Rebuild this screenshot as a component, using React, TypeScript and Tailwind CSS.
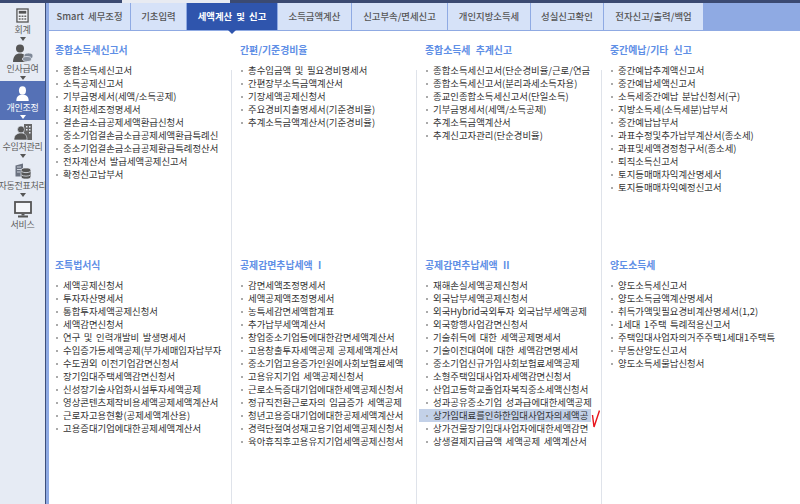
const tabs = [
  { label: 'Smart 세무조정', width: 'w-[81px]' },
  { label: '기초입력', width: 'w-[55px]' },
  { label: '세액계산 및 신고', width: 'w-[90px]', active: true },
  { label: '소득금액계산', width: 'w-[73px]' },
  { label: '신고부속/면세신고', width: 'w-[95px]' },
  { label: '개인지방소득세', width: 'w-[82px]' },
  { label: '성실신고확인', width: 'w-[72px]' },
  { label: '전자신고/출력/백업', width: 'w-[99px]' },
];

const columns = [
  {
    width: 'w-[183px]',
    pad: 'pl-[6px]',
    divider: 'border-r border-[#dfe3ea]',
    top: {
      title: '종합소득세신고서',
      items: ['종합소득세신고서', '소득공제신고서', '기부금명세서(세액/소득공제)', '최저한세조정명세서', '결손금소급공제세액환급신청서', '중소기업결손금소급공제세액환급특례신', '중소기업결손금소급공제환급특례정산서', '전자계산서 발급세액공제신고서', '확정신고납부서'],
    },
    bottom: {
      title: '조특법서식',
      items: ['세액공제신청서', '투자자산명세서', '통합투자세액공제신청서', '세액감면신청서', '연구 및 인력개발비 발생명세서', '수입증가등세액공제(부가세매입자납부자', '수도권외 이전기업감면신청서', '장기임대주택세액감면신청서', '신성장기술사업화시설투자세액공제', '영상콘텐츠제작비용세액공제세액계산서', '근로자고용현황(공제세액계산용)', '고용증대기업에대한공제세액계산서'],
    },
  },
  {
    width: 'w-[185px]',
    pad: 'pl-[8px]',
    divider: 'border-r border-[#dfe3ea]',
    top: {
      title: '간편/기준경비율',
      items: ['총수입금액 및 필요경비명세서', '간편장부소득금액계산서', '기장세액공제신청서', '주요경비지출명세서(기준경비율)', '추계소득금액계산서(기준경비율)'],
    },
    bottom: {
      title: '공제감면추납세액 I',
      items: ['감면세액조정명세서', '세액공제액조정명세서', '농특세감면세액합계표', '추가납부세액계산서', '창업중소기업등에대한감면세액계산서', '고용창출투자세액공제 공제세액계산서', '중소기업고용증가인원에사회보험료세액', '고용유지기업 세액공제신청서', '근로소득증대기업에대한세액공제신청서', '정규직전환근로자의 임금증가 세액공제', '청년고용증대기업에대한공제세액계산서', '경력단절여성재고용기업세액공제신청서', '육아휴직후고용유지기업세액공제신청서'],
    },
  },
  {
    width: 'w-[185px]',
    pad: 'pl-[8px]',
    divider: 'border-r border-[#dfe3ea]',
    top: {
      title: '종합소득세 추계신고',
      items: ['종합소득세신고서(단순경비율/근로/연금', '종합소득세신고서(분리과세소득자용)', '종교인종합소득세신고서(단일소득)', '기부금명세서(세액/소득공제)', '추계소득금액계산서', '추계신고자관리(단순경비율)'],
    },
    bottom: {
      title: '공제감면추납세액 II',
      items: ['재해손실세액공제신청서', '외국납부세액공제신청서', '외국Hybrid국외투자 외국납부세액공제', '외국항행사업감면신청서', '기술취득에 대한 세액공제명세서', '기술이전대여에 대한 세액감면명세서', '중소기업신규가입사회보험료세액공제', '소형주택임대사업자세액감면신청서', '산업고등학교졸업자복직중소세액신청서', '성과공유중소기업 성과급에대한세액공제', '상가임대료를인하한임대사업자의세액공', '상가건물장기임대사업자에대한세액감면', '상생결제지급금액 세액공제 세액계산서'],
      selected: '상가임대료를인하한임대사업자의세액공',
    },
  },
  {
    width: 'flex-1',
    pad: 'pl-[8px]',
    divider: '',
    top: {
      title: '중간예납/기타 신고',
      items: ['중간예납추계액신고서', '중간예납세액신고서', '소득세중간예납 분납신청서(구)', '지방소득세(소득세분)납부서', '중간예납납부서', '과표수정및추가납부계산서(종소세)', '과표및세액경정청구서(종소세)', '퇴직소득신고서', '토지등매매차익계산명세서', '토지등매매차익예정신고서'],
    },
    bottom: {
      title: '양도소득세',
      items: ['양도소득세신고서', '양도소득금액계산명세서', '취득가액및필요경비계산명세서(1,2)', '1세대 1주택 특례적용신고서', '주택임대사업자의거주주택1세대1주택특', '부동산양도신고서', '양도소득세물납신청서'],
    },
  },
];

function CalcIcon() {
  return (
    <svg width="13" height="15" viewBox="0 0 14 16">
      <rect x="1" y="1" width="12" height="14" fill="#f1f3f7" stroke="#555" strokeWidth="1.4" />
      <rect x="3" y="3" width="8" height="3" fill="#555" />
      <path d="M3 8h2v1.5H3zM6 8h2v1.5H6zM9 8h2v1.5H9zM3 11h2v1.5H3zM6 11h2v1.5H6zM9 11h2v1.5H9z" fill="#666" />
    </svg>
  );
}

function PersonCoinIcon() {
  return (
    <svg width="22" height="18" viewBox="0 0 22 18">
      <circle cx="8" cy="4.5" r="4" fill="#555" />
      <path d="M1 18c0-6 3-8.500 7-8.500s7 2.500 7 8.500z" fill="#555" />
      <ellipse cx="16.500" cy="12" rx="4.500" ry="3" fill="#7d8796" stroke="#e6ebf4" strokeWidth="0.8" />
      <ellipse cx="15" cy="15" rx="4.500" ry="2.500" fill="#8a93a1" stroke="#e6ebf4" strokeWidth="0.8" />
    </svg>
  );
}

function PersonIcon() {
  return (
    <svg width="15" height="15" viewBox="0 0 15 17">
      <ellipse cx="7.500" cy="5" rx="4" ry="4.800" fill="#fff" />
      <path d="M0.500 17c0-5 2.500-7 7-7s7 2 7 7z" fill="#fff" />
    </svg>
  );
}

function PersonBuildingIcon() {
  return (
    <svg width="18" height="16" viewBox="0 0 18 16">
      <rect x="10" y="0" width="8" height="16" fill="#666" />
      <path d="M12 2h1.500v1.500H12zM15 2h1.500v1.500H15zM12 5h1.500v1.500H12zM15 5h1.500v1.500H15zM15 8h1.500v1.500H15z" fill="#e6ebf4" />
      <circle cx="7" cy="5.500" r="3.500" fill="#555" stroke="#e6ebf4" strokeWidth="0.6" />
      <path d="M0 16c0-5 3-7 7-7s6 2 6 7z" fill="#555" stroke="#e6ebf4" strokeWidth="0.6" />
    </svg>
  );
}

function DocsDbIcon() {
  return (
    <svg width="16" height="16" viewBox="0 0 16 16">
      <path d="M0.500 2.500 8 0.500v13H0.500z" fill="#6b7280" />
      <path d="M2 4h4M2 6.500h4M2 9h3" stroke="#e6ebf4" strokeWidth="0.8" />
      <rect x="6" y="5" width="10" height="11" rx="3" fill="#555" stroke="#e6ebf4" strokeWidth="0.7" />
      <path d="M6.500 8.500c2 1.500 7 1.500 9 0M6.500 12c2 1.500 7 1.500 9 0" stroke="#e6ebf4" strokeWidth="0.8" fill="none" />
    </svg>
  );
}

function MonitorIcon() {
  return (
    <svg width="18" height="17" viewBox="0 0 18 17">
      <rect x="1" y="1" width="16" height="11" fill="#f4f6fa" stroke="#555" strokeWidth="1.800" />
      <path d="M7.500 13h3v1.500H7.500z" fill="#555" />
      <path d="M4 14.500h10V16.500H4z" fill="#555" />
    </svg>
  );
}

const sideItems = [
  { label: '회계', icon: <CalcIcon />, arrow: true },
  { label: '인사급여', icon: <PersonCoinIcon />, arrow: true },
  { label: '개인조정', icon: <PersonIcon />, arrow: true, active: true },
  { label: '수임처관리', icon: <PersonBuildingIcon />, arrow: true },
  { label: '자동전표처리', icon: <DocsDbIcon />, arrow: true },
  { label: '서비스', icon: <MonitorIcon />, arrow: false },
];

function List({ items, selected }: { items: string[]; selected?: string }) {
  return (
    <ul>
      {items.map((item) => (
        <li
          key={item}
          className={
            item === selected
              ? 'relative -ml-[6px] mr-[10px] flex h-[13px] items-center gap-[5px] bg-[#c3d1e8] pl-[7px] text-[9.4px] leading-[13px] whitespace-nowrap text-[#333] [word-spacing:1.5px]'
              : 'flex h-[13px] items-center gap-[5px] pl-[1px] text-[9.4px] leading-[13px] whitespace-nowrap text-[#333] [word-spacing:1.5px]'
          }
        >
          <span className="h-[2px] w-[2px] shrink-0 bg-[#aaa]" />
          <span>{item}</span>
          {item === selected && (
            <svg className="absolute top-[1px] -right-[9px]" width="9" height="18" viewBox="0 0 9 18">
              <path d="M1.500 5 3 17 8.500 0.500" fill="none" stroke="#e8141c" strokeWidth="1.400" />
            </svg>
          )}
        </li>
      ))}
    </ul>
  );
}

export default function App() {
  return (
    <div className="flex h-[504px] w-[800px] flex-col overflow-hidden bg-white font-['Noto_Sans_CJK_KR','Noto_Sans',sans-serif]">
      <div className="flex h-[3px] shrink-0">
        <div className="w-[122px] bg-[#3b4a72]" />
        <div className="w-[108px] bg-[#e8ebf2]" />
        <div className="flex-1 bg-[#3b4a72]" />
      </div>
      <div className="flex min-h-0 flex-1">
        {/* sidebar */}
        <aside className="w-[45px] shrink-0 bg-[#e6ebf4]">
          {sideItems.map((s) => (
            <div
              key={s.label}
              className={`flex h-[39px] flex-col items-center pt-[3px] ${s.active ? 'bg-[#5571b6] text-white' : 'text-[#5f5f5f]'}`}
            >
              <div className="flex h-[17px] items-end justify-center">{s.icon}</div>
              <span className="mt-[1px] text-[9px] leading-[12px] tracking-[-0.3px] whitespace-nowrap">{s.label}</span>
              {s.arrow && (
                <span className={`mt-[1px] h-0 w-0 border-x-[3px] border-t-[4px] border-x-transparent ${s.active ? 'border-t-white' : 'border-t-[#555]'}`} />
              )}
            </div>
          ))}
        </aside>
        <div className="w-[1px] shrink-0 bg-[#3d4f7a]" />
        <div className="w-[3px] shrink-0 bg-[#8faae3]" />

        <main className="flex min-w-0 flex-1 flex-col">
          {/* tabs */}
          <div className="flex h-[28px] shrink-0 gap-[1px] border-b border-[#8faae3] bg-[#8faae3]">
            {tabs.map((t) => (
              <div
                key={t.label}
                className={`relative flex items-center justify-center text-[9.4px] whitespace-nowrap [word-spacing:2px] ${t.width} ${t.active ? 'bg-[#2f55ad] font-bold text-white' : 'bg-[#d6e2f8] font-medium text-[#555]'}`}
              >
                {t.label}
                {t.active && (
                  <span className="absolute -bottom-[4px] left-1/2 h-0 w-0 -translate-x-1/2 border-x-[4px] border-t-[4px] border-x-transparent border-t-[#2f55ad]" />
                )}
              </div>
            ))}
          </div>

          {/* menu columns */}
          <div className="flex min-h-0 flex-1">
            {columns.map((col) => (
              <div key={col.top.title} className={`flex flex-col ${col.width}`}>
                <div className={`h-[39px] shrink-0 pt-[12px] text-[9.9px] leading-[14px] font-bold text-[#5f8fe6] [word-spacing:3px] ${col.pad}`}>
                  {col.top.title}
                </div>
                <div className={`flex-1 ${col.divider} ${col.pad}`}>
                  <div className="-mt-[6px] h-[194px]">
                    <List items={col.top.items} />
                  </div>
                  <h3 className="h-[21px] text-[9.9px] leading-[14px] font-bold text-[#5f8fe6] [word-spacing:3px]">{col.bottom.title}</h3>
                  <List items={col.bottom.items} selected={col.bottom.selected} />
                </div>
              </div>
            ))}
          </div>
        </main>
      </div>
    </div>
  );
}
